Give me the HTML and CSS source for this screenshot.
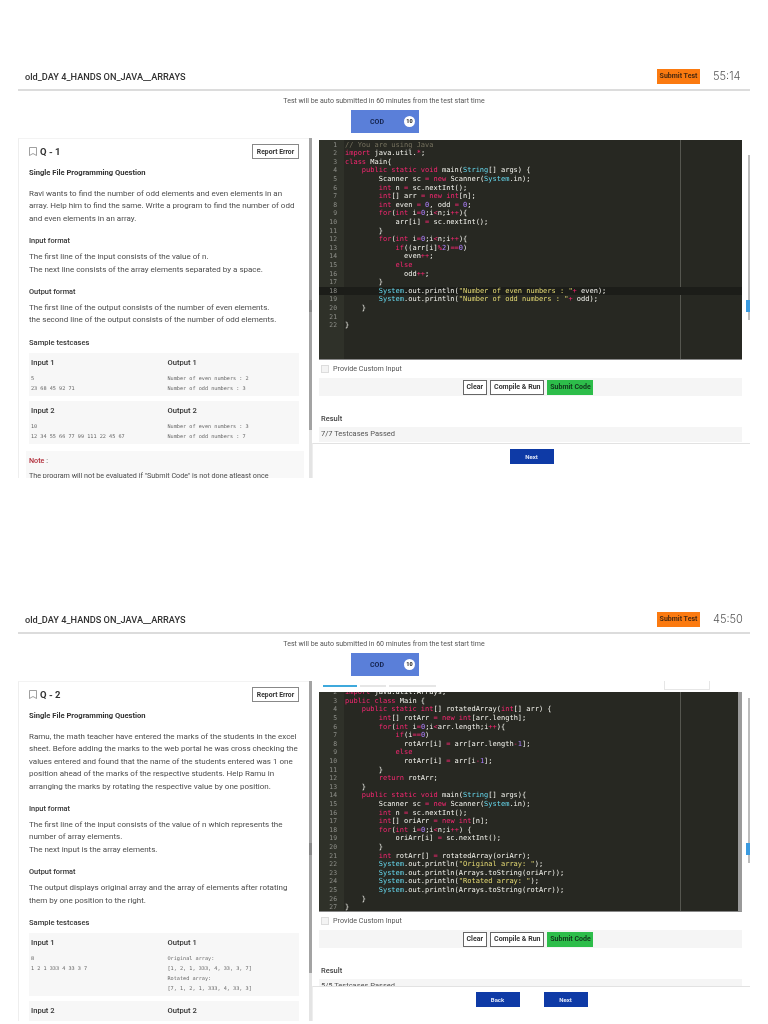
FILE: index.html
```html
<!DOCTYPE html>
<html lang="en">
<head>
<meta charset="utf-8">
<title>old_DAY 4_HANDS ON_JAVA__ARRAYS</title>
<link rel="stylesheet" href="styles.css">
</head>
<body>

<section class="shot">
  <header class="top">
    <h1>old_DAY 4_HANDS ON_JAVA__ARRAYS</h1>
    <button class="submit-test">Submit Test</button>
    <span class="timer">55:14</span>
  </header>
  <p class="notice">Test will be auto submitted in 60 minutes from the test start time</p>
  <div class="tabs"><div class="tab">COD<b>10</b></div></div>
  <div class="work">
    <aside class="question">
      <div class="q-head">
        <svg class="mark" viewBox="0 0 8 9"><path d="M.5.5h7v8L4 6.5.5 8.5z"/></svg>
        <strong>Q - 1</strong>
        <button class="report">Report Error</button>
      </div>
      <h3 class="kind">Single File Programming Question</h3>
      <p class="para">Ravi wants to find the number of odd elements and even elements in an array. Help him to find the same. Write a program to find the number of odd and even elements in an array.</p>
      <h4>Input format</h4>
      <p class="para">The first line of the input consists of the value of n.<br>The next line consists of the array elements separated by a space.</p>
      <h4>Output format</h4>
      <p class="para">The first line of the output consists of the number of even elements.<br>the second line of the output consists of the number of odd elements.</p>
      <h4 class="sample">Sample testcases</h4>
      <div class="case">
        <div><h5>Input 1</h5><pre>5
23 68 45 92 71</pre></div>
        <div><h5>Output 1</h5><pre>Number of even numbers : 2
Number of odd numbers : 3</pre></div>
      </div>
      <div class="case">
        <div><h5>Input 2</h5><pre>10
12 34 55 66 77 99 111 22 45 67</pre></div>
        <div><h5>Output 2</h5><pre>Number of even numbers : 3
Number of odd numbers : 7</pre></div>
      </div>
      <div class="note">
        <p class="note-title"><em>Note</em> :</p>
        <p>The program will not be evaluated if "Submit Code" is not done atleast once</p>
        <p>Extra spaces and new line characters in the program output will also result in the test</p>
      </div>
    </aside>
    <div class="split"><span></span></div>
    <div class="answer">
      <div class="main">
        <div class="editor">
          <div class="l"><i>1</i><span class="c">// You are using Java</span></div>
          <div class="l"><i>2</i><span><u>import</u> java.util.<u>*</u>;</span></div>
          <div class="l"><i>3</i><span><u>class</u> Main{</span></div>
          <div class="l"><i>4</i><span>    <u>public static void</u> main(<s>String</s>[] args) {</span></div>
          <div class="l"><i>5</i><span>        Scanner sc <u>=</u> <u>new</u> Scanner(<s>System</s>.in);</span></div>
          <div class="l"><i>6</i><span>        <u>int</u> n <u>=</u> sc.nextInt();</span></div>
          <div class="l"><i>7</i><span>        <u>int</u>[] arr <u>=</u> <u>new</u> <u>int</u>[n];</span></div>
          <div class="l"><i>8</i><span>        <u>int</u> even <u>=</u> <b>0</b>, odd <u>=</u> <b>0</b>;</span></div>
          <div class="l"><i>9</i><span>        <u>for</u>(<u>int</u> i<u>=</u><b>0</b>;i<u>&lt;</u>n;i<u>++</u>){</span></div>
          <div class="l"><i>10</i><span>            arr[i] <u>=</u> sc.nextInt();</span></div>
          <div class="l"><i>11</i><span>        }</span></div>
          <div class="l"><i>12</i><span>        <u>for</u>(<u>int</u> i<u>=</u><b>0</b>;i<u>&lt;</u>n;i<u>++</u>){</span></div>
          <div class="l"><i>13</i><span>            <u>if</u>((arr[i]<u>%</u><b>2</b>)<u>==</u><b>0</b>)</span></div>
          <div class="l"><i>14</i><span>              even<u>++</u>;</span></div>
          <div class="l"><i>15</i><span>            <u>else</u></span></div>
          <div class="l"><i>16</i><span>              odd<u>++</u>;</span></div>
          <div class="l"><i>17</i><span>        }</span></div>
          <div class="l active"><i>18</i><span>        <s>System</s>.out.println(<q>"Number of even numbers : "</q><u>+</u> even);</span></div>
          <div class="l"><i>19</i><span>        <s>System</s>.out.println(<q>"Number of odd numbers : "</q><u>+</u> odd);</span></div>
          <div class="l"><i>20</i><span>    }</span></div>
          <div class="l"><i>21</i><span></span></div>
          <div class="l"><i>22</i><span>}</span></div>
        </div>
        <label class="custom"><span class="box"></span>Provide Custom Input</label>
        <div class="actions">
          <button class="plain">Clear</button>
          <button class="plain">Compile &amp; Run</button>
          <button class="green">Submit Code</button>
        </div>
        <h4 class="result-title">Result</h4>
        <div class="result">7/7 Testcases Passed</div>
      </div>
      <div class="foot"><button class="nav">Next</button></div>
      <span class="thumb"></span>
      <span class="flag"></span>
    </div>
  </div>
</section>

<section class="shot">
  <header class="top">
    <h1>old_DAY 4_HANDS ON_JAVA__ARRAYS</h1>
    <button class="submit-test">Submit Test</button>
    <span class="timer">45:50</span>
  </header>
  <p class="notice">Test will be auto submitted in 60 minutes from the test start time</p>
  <div class="tabs"><div class="tab">COD<b>10</b></div></div>
  <div class="work">
    <aside class="question">
      <div class="q-head">
        <svg class="mark" viewBox="0 0 8 9"><path d="M.5.5h7v8L4 6.5.5 8.5z"/></svg>
        <strong>Q - 2</strong>
        <button class="report">Report Error</button>
      </div>
      <h3 class="kind">Single File Programming Question</h3>
      <p class="para">Ramu, the math teacher have entered the marks of the students in the excel sheet. Before adding the marks to the web portal he was cross checking the values entered and found that the name of the students entered was 1 one position ahead of the marks of the respective students. Help Ramu in arranging the marks by rotating the respective value by one position.</p>
      <h4>Input format</h4>
      <p class="para">The first line of the input consists of the value of n which represents the number of array elements.<br>The next input is the array elements.</p>
      <h4>Output format</h4>
      <p class="para">The output displays original array and the array of elements after rotating them by one position to the right.</p>
      <h4 class="sample">Sample testcases</h4>
      <div class="case">
        <div><h5>Input 1</h5><pre>8
1 2 1 333 4 33 3 7</pre></div>
        <div><h5>Output 1</h5><pre>Original array:
[1, 2, 1, 333, 4, 33, 3, 7]
Rotated array:
[7, 1, 2, 1, 333, 4, 33, 3]</pre></div>
      </div>
      <div class="case">
        <div><h5>Input 2</h5><pre>9
</pre></div>
        <div><h5>Output 2</h5><pre>Original array:
</pre></div>
      </div>
    </aside>
    <div class="split"><span></span></div>
    <div class="answer">
      <div class="main">
        <div class="strip"><span class="st-a"></span><span class="st-b"></span><span class="st-c"></span><span class="st-d"></span></div>
        <div class="editor scrolled">
          <div class="lines">
            <div class="l"><i>1</i><span></span></div>
            <div class="l"><i>2</i><span><u>import</u> java.util.Arrays;</span></div>
            <div class="l"><i>3</i><span><u>public class</u> Main {</span></div>
            <div class="l"><i>4</i><span>    <u>public static int</u>[] rotatedArray(<u>int</u>[] arr) {</span></div>
            <div class="l"><i>5</i><span>        <u>int</u>[] rotArr <u>=</u> <u>new</u> <u>int</u>[arr.length];</span></div>
            <div class="l"><i>6</i><span>        <u>for</u>(<u>int</u> i<u>=</u><b>0</b>;i<u>&lt;</u>arr.length;i<u>++</u>){</span></div>
            <div class="l"><i>7</i><span>            <u>if</u>(i<u>==</u><b>0</b>)</span></div>
            <div class="l"><i>8</i><span>              rotArr[i] <u>=</u> arr[arr.length<u>-</u><b>1</b>];</span></div>
            <div class="l"><i>9</i><span>            <u>else</u></span></div>
            <div class="l"><i>10</i><span>              rotArr[i] <u>=</u> arr[i<u>-</u><b>1</b>];</span></div>
            <div class="l"><i>11</i><span>        }</span></div>
            <div class="l"><i>12</i><span>        <u>return</u> rotArr;</span></div>
            <div class="l"><i>13</i><span>    }</span></div>
            <div class="l"><i>14</i><span>    <u>public static void</u> main(<s>String</s>[] args){</span></div>
            <div class="l"><i>15</i><span>        Scanner sc <u>=</u> <u>new</u> Scanner(<s>System</s>.in);</span></div>
            <div class="l"><i>16</i><span>        <u>int</u> n <u>=</u> sc.nextInt();</span></div>
            <div class="l"><i>17</i><span>        <u>int</u>[] oriArr <u>=</u> <u>new</u> <u>int</u>[n];</span></div>
            <div class="l"><i>18</i><span>        <u>for</u>(<u>int</u> i<u>=</u><b>0</b>;i<u>&lt;</u>n;i<u>++</u>) {</span></div>
            <div class="l"><i>19</i><span>            oriArr[i] <u>=</u> sc.nextInt();</span></div>
            <div class="l"><i>20</i><span>        }</span></div>
            <div class="l"><i>21</i><span>        <u>int</u> rotArr[] <u>=</u> rotatedArray(oriArr);</span></div>
            <div class="l"><i>22</i><span>        <s>System</s>.out.println(<q>"Original array: "</q>);</span></div>
            <div class="l"><i>23</i><span>        <s>System</s>.out.println(Arrays.toString(oriArr));</span></div>
            <div class="l"><i>24</i><span>        <s>System</s>.out.println(<q>"Rotated array: "</q>);</span></div>
            <div class="l"><i>25</i><span>        <s>System</s>.out.println(Arrays.toString(rotArr));</span></div>
            <div class="l"><i>26</i><span>    }</span></div>
            <div class="l"><i>27</i><span>}</span></div>
          </div>
        </div>
        <label class="custom"><span class="box"></span>Provide Custom Input</label>
        <div class="actions">
          <button class="plain">Clear</button>
          <button class="plain">Compile &amp; Run</button>
          <button class="green">Submit Code</button>
        </div>
        <h4 class="result-title">Result</h4>
        <div class="result">5/5 Testcases Passed</div>
      </div>
      <div class="foot two"><button class="nav">Back</button><button class="nav">Next</button></div>
      <span class="thumb"></span>
      <span class="flag"></span>
    </div>
  </div>
</section>

</body>
</html>
```

FILE: styles.css
```css
* { box-sizing: border-box; }
html, body { margin: 0; background: #fff; }
body {
  padding-top: 65px;
  font-family: Roboto, "Liberation Sans", sans-serif;
  color: #444;
  filter: blur(0.35px);
}
p, h1, h3, h4, h5, pre { margin: 0; }
button { font-family: inherit; cursor: pointer; padding: 0; }

.shot {
  display: flex;
  flex-direction: column;
  width: 732px;
  height: 413px;
  margin: 0 0 130px 18px;
  overflow: hidden;
}

.top {
  flex: none;
  display: flex;
  align-items: center;
  height: 26px;
  padding: 0 12px 2px 7px;
  border-bottom: 2px solid #dcdcdc;
}
.top h1 { flex: 1; font-size: 9.2px; font-weight: 500; color: #333; }
.submit-test {
  width: 43px;
  height: 15px;
  border: 0;
  background: #fb7a10;
  color: #4a2a10;
  font-size: 7px;
  font-weight: 700;
}
.timer {
  width: 25px;
  margin-left: 13px;
  font-family: Inter, sans-serif;
  font-size: 11px;
  font-weight: 300;
  color: #555;
}

.notice { flex: none; height: 19px; padding-top: 6px; text-align: center; font-size: 7px; line-height: 9px; color: #555; }
.tabs { flex: none; height: 28px; padding-left: 333px; }
.tab {
  display: flex;
  align-items: center;
  width: 68px;
  height: 23px;
  padding-left: 19px;
  background: #5a7fd9;
  color: #15244f;
  font-size: 7px;
  font-weight: 700;
}
.tab b {
  width: 11px;
  height: 11px;
  margin-left: 20px;
  border-radius: 50%;
  background: #fff;
  color: #333;
  font-size: 5.5px;
  line-height: 11px;
  text-align: center;
}

.work { flex: 1; display: flex; min-height: 0; }

.question {
  flex: none;
  width: 291px;
  padding: 5px 10px 0 10px;
  overflow: hidden;
  border-left: 1px solid #eee;
  border-top: 1px solid #f3f3f3;
}
.q-head { display: flex; align-items: center; height: 15px; color: #333; }
.mark { width: 8px; height: 9px; margin-right: 3px; fill: none; stroke: #777; stroke-width: .7; }
.q-head strong { flex: 1; font-size: 9.5px; font-weight: 700; }
.report {
  width: 47px;
  height: 15px;
  border: 1px solid #888;
  background: #fff;
  color: #333;
  font-size: 6.8px;
  font-weight: 700;
}
.kind { margin-top: 9px; font-size: 7.6px; line-height: 10px; font-weight: 700; color: #333; }
.para { margin-top: 10px; font-size: 8px; line-height: 12.4px; color: #4c4c4c; }
.question h4 { margin-top: 11px; font-size: 7.4px; line-height: 10px; font-weight: 500; color: #333; }
.question h4 + .para { margin-top: 5px; }
.question .sample { margin-top: 11px; font-size: 7.6px; }

.case {
  display: grid;
  grid-template-columns: 136.5px 1fr;
  margin-top: 5px;
  padding: 5px 2px 3px;
  background: #f7f7f7;
}
.sample + .case { margin-top: 5px; }
.case h5 { font-size: 7.6px; line-height: 10px; font-weight: 500; color: #333; }
.case pre {
  margin-top: 5px;
  font-family: "DejaVu Sans Mono", monospace;
  font-size: 5.2px;
  line-height: 10px;
  color: #666;
}

.note {
  width: 278px;
  margin: 7px 0 0 -3px;
  padding: 5px 3px;
  background: #f8f8f8;
  font-size: 7.2px;
  line-height: 10px;
  color: #4c4c4c;
}
.note p + p { margin-top: 5px; }
.note em { font-style: normal; font-weight: 500; color: #b02a37; }

.split { position: relative; flex: none; width: 3px; background: #e4e4e4; }
.split span { display: block; height: 292px; background: #a3a3a3; }
.split span::after {
  content: "";
  position: absolute;
  left: 0;
  top: 162px;
  width: 3px;
  height: 12px;
  background: #888;
}

.answer { position: relative; flex: 1; display: flex; flex-direction: column; min-width: 0; }
.main { flex: 1; min-height: 0; overflow: hidden; padding-top: 2px; }

.strip { display: flex; align-items: flex-end; height: 6px; margin-top: -2px; padding-left: 11px; }
.strip span { height: 2px; margin-right: 3px; background: #e6e6e6; }
.strip .st-a { width: 34px; background: #3fa9dc; }
.strip .st-b { width: 26px; }
.strip .st-c { width: 47px; }
.strip .st-d { width: 46px; height: 9px; margin: 0 0 -3px 225px; background: #fff; border: 1px solid #e6e6e6; border-top: 0; }

.editor {
  height: 220px;
  margin: 0 8px 0 7px;
  padding-top: .7px;
  overflow: hidden;
  border-bottom: 1px solid #888;
  background:
    linear-gradient(90deg, transparent 361px, #55564f 361px, #55564f 362px, transparent 362px),
    linear-gradient(90deg, #2f3129 25px, #272822 25px);
  font-family: "DejaVu Sans Mono", monospace;
  font-size: 7px;
  line-height: 8.6px;
  color: #f4f4ee;
}
.editor.scrolled { border-right: 4px solid #9a9a9a; margin-top: 5px; padding-top: 0; }
.lines { margin-top: -12.3px; }
.l { display: flex; height: 8.6px; white-space: pre; }
.l i {
  flex: none;
  width: 18px;
  margin-right: 8px;
  font-style: normal;
  text-align: right;
  color: #8f908a;
  font-size: 6.4px;
}
.l.active { background: #1c1d19; }
.l u { text-decoration: none; color: #f92672; }
.l s { text-decoration: none; color: #66d9ef; }
.l b { font-weight: 400; color: #ae81ff; }
.l q { quotes: none; color: #e6db74; }
.l .c { color: #75715e; }

.custom {
  display: flex;
  align-items: center;
  height: 18px;
  padding: 0 0 1px 9px;
  font-size: 7.2px;
  color: #555;
}
.box { width: 8px; height: 8px; margin-right: 4px; border: 1px solid #ddd; background: #f4f4f4; }

.actions {
  display: flex;
  justify-content: center;
  align-items: center;
  gap: 3px;
  height: 18px;
  margin: 0 8px 0 7px;
  padding-right: 5px;
  background: #f5f5f5;
}
.actions button { height: 15px; font-size: 7px; font-weight: 700; color: #333; }
.plain { background: #fff; border: 1px solid #666; padding: 0 3px; }
.actions .green { width: 46px; border: 0; background: #2dbd4a; color: #12361c; }

.result-title { margin: 18px 0 0 9px; font-size: 7.5px; line-height: 10px; font-weight: 500; color: #444; }
.result {
  height: 15px;
  margin: 3px 8px 0 7px;
  padding-left: 2px;
  background: #f5f5f5;
  font-size: 7.5px;
  line-height: 14px;
  color: #555;
}

.foot {
  flex: none;
  display: flex;
  justify-content: center;
  gap: 24px;
  height: 35px;
  padding: 5px 0 0 0;
  border-top: 1px solid #e2e2e2;
  border-left: 1px solid #eee;
}
.nav {
  width: 44px;
  height: 15px;
  border: 0;
  background: #0e3aa6;
  color: #dfe6f7;
  font-size: 6px;
  font-weight: 700;
}

.thumb { position: absolute; right: 0; top: 17px; width: 2px; height: 165px; background: #bdbdbd; }
.flag { position: absolute; right: 0; top: 162px; width: 4px; height: 12px; background: #3b9be0; }
```
